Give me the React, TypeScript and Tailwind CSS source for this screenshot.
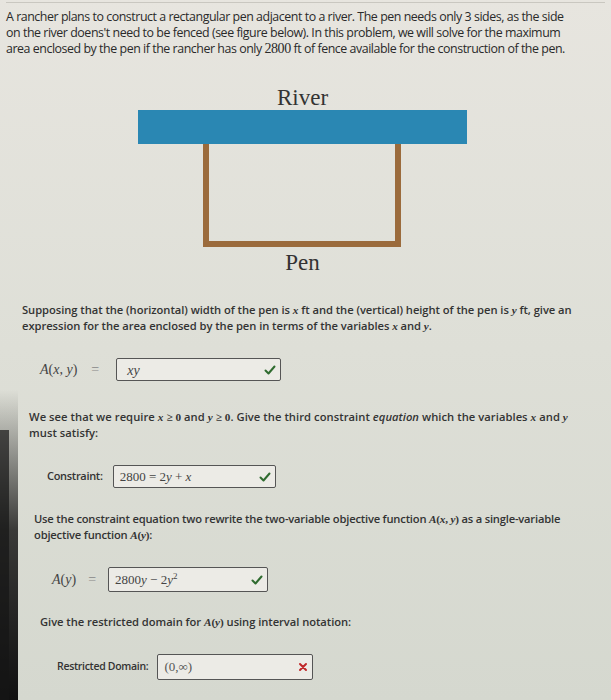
import React from "react";

const serif = '"Liberation Serif", "DejaVu Serif", serif';
const M = ({ children }: { children: React.ReactNode }) => (
  <span className="italic" style={{ fontFamily: serif }}>{children}</span>
);
const N = ({ children }: { children: React.ReactNode }) => (
  <span style={{ fontFamily: serif }}>{children}</span>
);

const Check = () => (
  <svg width="12" height="10" viewBox="0 0 12 10" className="shrink-0">
    <path d="M1.5 5.5 L4.5 8.5 L10.5 1.5" fill="none" stroke="#2f6b2f" strokeWidth="2" strokeLinecap="round" strokeLinejoin="round" />
  </svg>
);
const Cross = () => (
  <svg width="10" height="10" viewBox="0 0 10 10" className="shrink-0">
    <path d="M2 2 L8 8 M8 2 L2 8" fill="none" stroke="#c0282a" strokeWidth="2" strokeLinecap="round" />
  </svg>
);

export default function App() {
  return (
    <div
      className="relative w-[611px] h-[700px] overflow-hidden bg-gradient-to-b from-[#e7e5df] via-[#dedfd7] to-[#d5d8cf] text-[#2e2e2e]"
      style={{ fontFamily: '"Open Sans", "DejaVu Sans", sans-serif' }}
    >
      <div className="pointer-events-none absolute left-0 top-[390px] w-[18px] h-[310px] bg-gradient-to-b from-transparent via-[#3a3a38] via-[45%] to-[#111]" />
      <div className="pointer-events-none absolute left-0 top-[430px] w-[9px] h-[270px] bg-[#161616] opacity-70" />
      <div className="flex flex-col">
        <div className="h-[3px] border-b border-[#c9c7c0] mx-[6px]" />
        <div className="pl-[6px] pt-[6px] text-[12.4px] leading-[16px] tracking-[-0.45px] font-medium text-[#2a2a2a]">
          <div>A rancher plans to construct a rectangular pen adjacent to a river. The pen needs only 3 sides, as the side</div>
          <div>on the river doens't need to be fenced (see figure below). In this problem, we will solve for the maximum</div>
          <div>area enclosed by the pen if the rancher has only <N><span className="text-[14px]">2800</span></N> ft of fence available for the construction of the pen.</div>
        </div>

        {/* figure */}
        <div className="flex flex-col items-center mt-[29px] ml-[-6px]">
          <div className="text-[23px] leading-[24px] text-[#333]" style={{ fontFamily: serif }}>River</div>
          <div className="w-[329px] h-[34px] bg-[#2a87b3]" />
          <div className="w-[198px] h-[103px] border-[6px] border-t-0 border-[#9b6b3c] ml-[-2px]" />
          <div className="mt-[3px] text-[23px] leading-[26px] text-[#333]" style={{ fontFamily: serif }}>Pen</div>
        </div>

        <div className="mt-[26px] pl-[22px] text-[11.2px] leading-[15px] font-semibold text-[#333] tracking-[-0.05px]">
          <div>Supposing that the (horizontal) width of the pen is <M>x</M> ft and the (vertical) height of the pen is <M>y</M> ft, give an</div>
          <div>expression for the area enclosed by the pen in terms of the variables <M>x</M> and <M>y</M>.</div>
        </div>

        <div className="mt-[24px] pl-[40px] flex items-center">
          <div className="text-[14px] text-[#444]" style={{ fontFamily: serif }}>
            <i>A</i>(<i>x</i>, <i>y</i>)
          </div>
          <div className="ml-[14px] text-[14px] text-[#888]" style={{ fontFamily: serif }}>=</div>
          <div className="ml-[17px] w-[165px] h-[23px] border border-[#555] rounded-[2px] bg-[#ecebe6] flex items-center justify-between pl-[10px] pr-[4px]">
            <span className="text-[14px] text-[#444]"><M>xy</M></span>
            <Check />
          </div>
        </div>

        <div className="mt-[28px] pl-[29px] text-[11.2px] leading-[16px] font-semibold text-[#333] tracking-[0.05px]">
          <div>We see that we require <M>x</M> <N>≥ 0</N> and <M>y</M> <N>≥ 0</N>. Give the third constraint <span className="italic">equation</span> which the variables <M>x</M> and <M>y</M></div>
          <div>must satisfy:</div>
        </div>

        <div className="mt-[24px] pl-[47px] flex items-center">
          <div className="text-[11px] font-semibold text-[#333] tracking-[-0.3px]">Constraint:</div>
          <div className="ml-[10px] w-[163px] h-[23px] border border-[#555] rounded-[2px] bg-[#ecebe6] flex items-center justify-between pl-[6px] pr-[4px]">
            <span className="text-[13px] text-[#444]"><N>2800</N><N> = 2</N><M>y</M><N> + </N><M>x</M></span>
            <Check />
          </div>
        </div>

        <div className="mt-[23px] pl-[34px] text-[11.2px] leading-[16px] font-semibold text-[#333] tracking-[-0.2px]">
          <div>Use the constraint equation two rewrite the two-variable objective function <N><i>A</i>(<i>x</i>, <i>y</i>)</N> as a single-variable</div>
          <div>objective function <N><i>A</i>(<i>y</i>)</N>:</div>
        </div>

        <div className="mt-[24px] pl-[52px] flex items-center">
          <div className="text-[14px] text-[#444]" style={{ fontFamily: serif }}>
            <i>A</i>(<i>y</i>)
          </div>
          <div className="ml-[12px] text-[14px] text-[#888]" style={{ fontFamily: serif }}>=</div>
          <div className="ml-[12px] w-[160px] h-[25px] border border-[#555] rounded-[2px] bg-[#ecebe6] flex items-center justify-between pl-[6px] pr-[4px]">
            <span className="text-[13px] text-[#444]"><N>2800</N><M>y</M><N> − 2</N><M>y</M><sup className="text-[9px]"><N>2</N></sup></span>
            <Check />
          </div>
        </div>

        <div className="mt-[22px] pl-[40px] text-[11.2px] leading-[16px] font-semibold text-[#333] tracking-[-0.05px]">
          <div>Give the restricted domain for <N><i>A</i>(<i>y</i>)</N> using interval notation:</div>
        </div>

        <div className="mt-[24px] pl-[57px] flex items-center">
          <div className="text-[10.5px] font-semibold text-[#333] tracking-[-0.3px]">Restricted Domain:</div>
          <div className="ml-[9px] w-[156px] h-[26px] border border-[#555] rounded-[2px] bg-[#ecebe6] flex items-center justify-between pl-[6px] pr-[4px]">
            <span className="text-[13px] text-[#555]"><N>(0,∞)</N></span>
            <Cross />
          </div>
        </div>
      </div>
    </div>
  );
}
